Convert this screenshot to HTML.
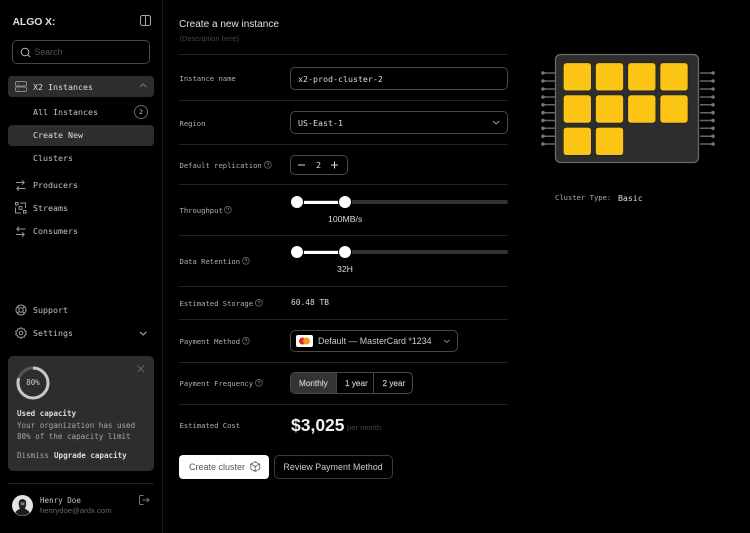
<!DOCTYPE html>
<html><head><meta charset="utf-8"><style>
*{box-sizing:border-box;margin:0;padding:0}
html,body{width:750px;height:533px;background:#000;overflow:hidden}
body{position:relative;font-family:"Liberation Sans",sans-serif;color:#ddd}
.a{position:absolute;white-space:nowrap}
.m{font-family:"DejaVu Sans Mono",monospace;font-size:8.3px;line-height:12px;color:#c4c4c4}
.l{font-family:"DejaVu Sans Mono",monospace;font-size:7.2px;line-height:10px;color:#b0b0b0;margin-top:.5px}
.t{font-family:"DejaVu Sans Mono",monospace;font-size:7.55px}
.hr{position:absolute;left:179px;width:329px;height:1px;background:#222}
.box{position:absolute;border:1px solid #484848;border-radius:5px;background:#000}
svg{position:absolute;overflow:visible}
.th{position:absolute;width:12px;height:12px;background:#fff;border-radius:50%;box-shadow:0 0 0 1px #000}
.tr{position:absolute;height:4px;background:#333;border-radius:2px;left:297px;width:211px}
.tw{position:absolute;height:3px;background:#fff;left:297px;width:48px}
.s{font-size:8.7px;line-height:12px;color:#ddd}
.q{fill:none;stroke:#777;stroke-width:.7}
</style></head><body>
<div class="a" style="left:162px;top:0;width:1px;height:533px;background:#1c1c1c"></div>

<div class="a" style="left:12.500px;top:15px;font-size:10.500px;font-weight:bold;line-height:14px;color:#ddd;letter-spacing:-.15px">ALGO X:</div>
<svg style="left:140px;top:15px" width="12" height="12" fill="none" stroke="#aaa"><rect x=".5" y=".5" width="10" height="10" rx="2"/><path d="M5.500 .5v10"/></svg>

<div class="box" style="left:12px;top:40px;width:138px;height:24px"></div>
<svg style="left:20px;top:47px" width="11" height="11" fill="none" stroke="#bbb"><circle cx="5" cy="5" r="3.800"/><path d="M8 8l2 2"/></svg>
<div class="a" style="left:34.500px;top:46px;font-size:8.800px;line-height:12px;color:#555">Search</div>

<div class="a" style="left:8px;top:76px;width:146px;height:21px;background:#2d2d2d;border-radius:4px"></div>
<svg style="left:15px;top:81px" width="13" height="12" fill="none" stroke="#888"><rect x=".5" y=".5" width="11" height="4.500" rx="1.500"/><rect x=".5" y="6" width="11" height="4.500" rx="1.500"/><path d="M3 2.700h1M3 8.200h1"/></svg>
<div class="a m" style="left:33px;top:81px;color:#ddd">X2 Instances</div>
<svg style="left:139px;top:83px" width="9" height="6" fill="none" stroke="#777"><path d="M1 4l3.200-3 3.200 3"/></svg>

<div class="a m" style="left:33px;top:106px">All Instances</div>
<div class="a" style="left:134px;top:105px;width:14px;height:14px;border:1px solid #666;border-radius:50%;font:6.500px/12px 'DejaVu Sans Mono',monospace;text-align:center;color:#ccc">2</div>
<div class="a" style="left:8px;top:125px;width:146px;height:21px;background:#2d2d2d;border-radius:4px"></div>
<div class="a m" style="left:33px;top:129px;color:#ddd">Create New</div>
<div class="a m" style="left:33px;top:152px">Clusters</div>

<svg style="left:16px;top:180px" width="10" height="11" fill="none" stroke="#999"><path d="M0 2.500h8M6 .3L8.200 2.500 6 4.700M1 8.500h8.500M3 6.300L.8 8.500 3 10.700"/></svg>
<div class="a m" style="left:33px;top:179px">Producers</div>
<svg style="left:15px;top:202px" width="12" height="12" fill="none" stroke="#999"><rect x=".5" y=".5" width="2.500" height="2.500"/><rect x="4" y="4.500" width="3" height="3" rx=".5"/><rect x="8.500" y="8.500" width="2.500" height="2.500"/><path d="M5 1h5.500v5M.5 5.500v5.500H6"/></svg>
<div class="a m" style="left:33px;top:202px">Streams</div>
<svg style="left:16px;top:226px" width="10" height="11" fill="none" stroke="#999"><path d="M1 3h8.500M3 .8L.8 3 3 5.200M0 8.500h8M6 6.300l2.200 2.200L6 10.700"/></svg>
<div class="a m" style="left:33px;top:225px">Consumers</div>

<svg style="left:15px;top:304px" width="12" height="12" fill="none" stroke="#999"><circle cx="6" cy="6" r="5"/><circle cx="6" cy="6" r="2.200"/><path d="M2.500 2.500l2 2M9.500 2.500l-2 2M2.500 9.500l2-2M9.500 9.500l-2-2"/></svg>
<div class="a m" style="left:33px;top:304px">Support</div>
<svg style="left:15px;top:327px" width="12" height="12" fill="none" stroke="#999"><path d="M6 .5l1.200 1.500 1.900-.2.500 1.800 1.700.9-.7 1.500.7 1.500-1.700.9-.5 1.800-1.900-.2L6 11.500 4.800 10l-1.900.2-.5-1.800-1.700-.9.700-1.500-.7-1.500 1.700-.9.500-1.800 1.900.2z"/><circle cx="6" cy="6" r="1.800"/></svg>
<div class="a m" style="left:33px;top:327px">Settings</div>
<svg style="left:139px;top:331px" width="9" height="6" fill="none" stroke="#bbb"><path d="M1 1l3.200 3 3.200-3"/></svg>

<div class="a" style="left:8px;top:356px;width:146px;height:115px;background:#2d2d2d;border-radius:5px"></div>
<svg style="left:16px;top:366px" width="34" height="34" fill="none"><circle cx="17" cy="17" r="15" stroke="#555" stroke-width="3"/><circle cx="17" cy="17" r="15" stroke="#c8c8c8" stroke-width="3" stroke-dasharray="75.400 94.200" transform="rotate(-90 17 17)"/></svg>
<div class="a" style="left:16px;top:377px;width:34px;text-align:center;font:7.500px/12px 'DejaVu Sans Mono',monospace;color:#ccc">80%</div>
<svg style="left:137px;top:365px" width="8" height="8" fill="none" stroke="#666"><path d="M.5.5l6.500 6.500M7 .5L.5 7"/></svg>
<div class="a t" style="left:17px;top:408px;line-height:11px;font-weight:bold;color:#ddd">Used capacity</div>
<div class="a t" style="left:17px;top:421px;line-height:10.500px;color:#a8a8a8;white-space:pre">Your organization has used
80% of the capacity limit</div>
<div class="a t" style="left:17px;top:450px;line-height:11px;color:#a8a8a8">Dismiss</div>
<div class="a t" style="left:54px;top:450px;line-height:11px;font-weight:bold;color:#ddd">Upgrade capacity</div>

<div class="a" style="left:8px;top:483px;width:146px;height:1px;background:#222"></div>
<svg style="left:12px;top:495px" width="22" height="22"><circle cx="10.500" cy="10.500" r="10.500" fill="#e4e4e4"/><path d="M3.500 17.500c1-2.500 3.500-3 4.500-4-1.200-1.500-1.800-5.500-.7-7.700C8.500 3.500 12.500 3.500 13.700 5.800c1 2.200.3 6.200-.9 7.700 1 1 3.700 1.500 4.700 4-1.800 2-4.300 3.200-7 3.200s-5.200-1.200-7-3.200z" fill="#1e1e1e"/><path d="M8.600 7.200h3.900v3H8.600z" fill="#8a7466"/></svg>
<div class="a t" style="left:40px;top:495px;line-height:11px;color:#c4c4c4">Henry Doe</div>
<div class="a" style="left:40px;top:505px;font-size:7.700px;line-height:12px;color:#666">henrydoe@ardx.com</div>
<svg style="left:139px;top:495px" width="11" height="11" fill="none" stroke="#777"><path d="M4.500.5H1.500Q.5.5.5 1.500v7q0 1 1 1h3M3.500 5h6.500M8 3l2 2-2 2"/></svg>

<div class="a" style="left:179px;top:17.500px;font-size:10.050px;line-height:14px;color:#e2e2e2">Create a new instance</div>
<div class="a" style="left:179.500px;top:33px;font-size:7.500px;line-height:11px;color:#444">(Description here)</div>
<div class="hr" style="top:54px"></div>

<div class="a l" style="left:179.500px;top:73px">Instance name</div>
<div class="box" style="left:290px;top:67px;width:218px;height:23px"></div>
<div class="a m" style="left:298px;top:73px;color:#ddd">x2-prod-cluster-2</div>
<div class="hr" style="top:100px"></div>

<div class="a l" style="left:179.500px;top:118px">Region</div>
<div class="box" style="left:290px;top:111px;width:218px;height:23px"></div>
<div class="a m" style="left:298px;top:117px;color:#ddd">US-East-1</div>
<svg style="left:492px;top:120px" width="9" height="6" fill="none" stroke="#999"><path d="M1 1l3.200 3 3.200-3"/></svg>
<div class="hr" style="top:144px"></div>

<div class="a l" style="left:179.500px;top:160px">Default replication</div>
<svg style="left:264px;top:161px" width="8" height="8"><g class="q"><circle cx="3.800" cy="3.800" r="3.400"/><path d="M2.800 3c0-1.400 2-1.400 2 0 0 .7-1 .7-1 1.500M3.800 5.400v.5"/></g></svg>
<div class="box" style="left:290px;top:155px;width:58px;height:20px"></div>
<svg style="left:298px;top:161px" width="42" height="8" fill="none" stroke="#ddd"><path d="M0 4h7M33 4h7M36.500 .5v7"/></svg>
<div class="a m" style="left:316px;top:159px;color:#ddd">2</div>
<div class="hr" style="top:184px"></div>

<div class="a l" style="left:179.500px;top:205px">Throughput</div>
<svg style="left:224px;top:206px" width="8" height="8"><g class="q"><circle cx="3.800" cy="3.800" r="3.400"/><path d="M2.800 3c0-1.400 2-1.400 2 0 0 .7-1 .7-1 1.500M3.800 5.400v.5"/></g></svg>
<div class="tr" style="top:200px"></div><div class="tw" style="top:200.500px"></div>
<div class="th" style="left:291px;top:196px"></div><div class="th" style="left:339px;top:196px"></div>
<div class="a s" style="left:328px;top:213px">100MB/s</div>
<div class="hr" style="top:235px"></div>

<div class="a l" style="left:179.500px;top:256px">Data Retention</div>
<svg style="left:242px;top:257px" width="8" height="8"><g class="q"><circle cx="3.800" cy="3.800" r="3.400"/><path d="M2.800 3c0-1.400 2-1.400 2 0 0 .7-1 .7-1 1.500M3.800 5.400v.5"/></g></svg>
<div class="tr" style="top:250px"></div><div class="tw" style="top:250.500px"></div>
<div class="th" style="left:291px;top:246px"></div><div class="th" style="left:339px;top:246px"></div>
<div class="a s" style="left:337px;top:263px">32H</div>
<div class="hr" style="top:286px"></div>

<div class="a l" style="left:179.500px;top:298px">Estimated Storage</div>
<svg style="left:255px;top:299px" width="8" height="8"><g class="q"><circle cx="3.800" cy="3.800" r="3.400"/><path d="M2.800 3c0-1.400 2-1.400 2 0 0 .7-1 .7-1 1.500M3.800 5.400v.5"/></g></svg>
<div class="a" style="left:291px;top:297px;font:7.900px/12px 'DejaVu Sans Mono',monospace;color:#ddd">60.48 TB</div>
<div class="hr" style="top:319px"></div>

<div class="a l" style="left:179.500px;top:336px">Payment Method</div>
<svg style="left:242px;top:337px" width="8" height="8"><g class="q"><circle cx="3.800" cy="3.800" r="3.400"/><path d="M2.800 3c0-1.400 2-1.400 2 0 0 .7-1 .7-1 1.500M3.800 5.400v.5"/></g></svg>
<div class="box" style="left:290px;top:330px;width:168px;height:22px"></div>
<svg style="left:296px;top:335px" width="18" height="12"><rect width="17" height="12" rx="2" fill="#fff"/><circle cx="6.500" cy="6" r="3.500" fill="#e5231b"/><circle cx="10.500" cy="6" r="3.500" fill="#f79e1b"/></svg>
<div class="a" style="left:318px;top:335px;font-size:8.850px;line-height:12px;color:#ccc">Default — MasterCard *1234</div>
<svg style="left:443px;top:339px" width="8" height="5" fill="none" stroke="#999" stroke-width=".8"><path d="M1 .8l2.800 2.600L6.600 .8"/></svg>
<div class="hr" style="top:362px"></div>

<div class="a l" style="left:179.500px;top:378px">Payment Frequency</div>
<svg style="left:255px;top:379px" width="8" height="8"><g class="q"><circle cx="3.800" cy="3.800" r="3.400"/><path d="M2.800 3c0-1.400 2-1.400 2 0 0 .7-1 .7-1 1.500M3.800 5.400v.5"/></g></svg>
<div class="box" style="left:290px;top:372px;width:123px;height:22px"></div>
<div class="a" style="left:291px;top:373px;width:46px;height:20px;background:#333;border-radius:4px 0 0 4px;border-right:1px solid #444"></div>
<div class="a" style="left:373px;top:373px;width:1px;height:20px;background:#444"></div>
<div class="a" style="left:299px;top:377.500px;font-size:8.200px;line-height:12px;color:#ccc;-webkit-text-stroke:.15px #ccc">Monthly</div>
<div class="a" style="left:345px;top:377.500px;font-size:8.200px;line-height:12px;color:#ccc;-webkit-text-stroke:.15px #ccc">1 year</div>
<div class="a" style="left:382.500px;top:377.500px;font-size:8.200px;line-height:12px;color:#ccc;-webkit-text-stroke:.15px #ccc">2 year</div>
<div class="hr" style="top:404px"></div>

<div class="a l" style="left:179.500px;top:420px">Estimated Cost</div>
<div class="a" style="left:291px;top:414px;font-size:17.500px;font-weight:bold;line-height:22px;color:#eee">$3,025</div>
<div class="a" style="left:347px;top:422px;font-size:7.600px;line-height:12px;color:#444">per month</div>

<div class="a" style="left:179px;top:455px;width:90px;height:24px;background:#fff;border-radius:4px"></div>
<div class="a" style="left:189px;top:461px;font-size:9px;line-height:12px;color:#555">Create cluster</div>
<svg style="left:250px;top:461px" width="11" height="12" fill="none" stroke="#555"><path d="M5.200 .8l4.500 2.200v5L5.200 10.500.7 8V3zM.7 3l4.500 2.500L9.700 3M5.200 5.500v5" stroke-dasharray="2 .6"/></svg>
<div class="box" style="left:274px;top:455px;width:119px;height:24px;border-color:#3c3c3c"></div>
<div class="a" style="left:283.500px;top:461px;font-size:8.800px;line-height:12px;color:#ccc;letter-spacing:.07px">Review Payment Method</div>

<svg style="left:541px;top:54px" width="174" height="110">
<g stroke="#666" stroke-width="1.500" fill="#777">
<path d="M2 19h13M2 27h13M2 35h13M2 43h13M2 50.800h13M2 58.700h13M2 66.500h13M2 74.300h13M2 82.200h13M2 90h13M159 19h13M159 27h13M159 35h13M159 43h13M159 50.800h13M159 58.700h13M159 66.500h13M159 74.300h13M159 82.200h13M159 90h13" fill="none"/>
<g stroke="none"><circle cx="2" cy="19" r="1.800"/><circle cx="2" cy="27" r="1.800"/><circle cx="2" cy="35" r="1.800"/><circle cx="2" cy="43" r="1.800"/><circle cx="2" cy="50.800" r="1.800"/><circle cx="2" cy="58.700" r="1.800"/><circle cx="2" cy="66.500" r="1.800"/><circle cx="2" cy="74.300" r="1.800"/><circle cx="2" cy="82.200" r="1.800"/><circle cx="2" cy="90" r="1.800"/><circle cx="172" cy="19" r="1.800"/><circle cx="172" cy="27" r="1.800"/><circle cx="172" cy="35" r="1.800"/><circle cx="172" cy="43" r="1.800"/><circle cx="172" cy="50.800" r="1.800"/><circle cx="172" cy="58.700" r="1.800"/><circle cx="172" cy="66.500" r="1.800"/><circle cx="172" cy="74.300" r="1.800"/><circle cx="172" cy="82.200" r="1.800"/><circle cx="172" cy="90" r="1.800"/></g>
</g>
<rect x="14.500" y=".5" width="143" height="108" rx="5" fill="#2d2d2d" stroke="#6a6a6a" stroke-width="1.300"/>
<g fill="#fcc515" stroke="#1c1c1c" stroke-width=".6">
<rect x="22.300" y="8.800" width="28" height="28" rx="3"/><rect x="54.500" y="8.800" width="28" height="28" rx="3"/><rect x="86.800" y="8.800" width="28" height="28" rx="3"/><rect x="119" y="8.800" width="28" height="28" rx="3"/>
<rect x="22.300" y="41" width="28" height="28" rx="3"/><rect x="54.500" y="41" width="28" height="28" rx="3"/><rect x="86.800" y="41" width="28" height="28" rx="3"/><rect x="119" y="41" width="28" height="28" rx="3"/>
<rect x="22.300" y="73.300" width="28" height="28" rx="3"/><rect x="54.500" y="73.300" width="28" height="28" rx="3"/>
</g></svg>
<div class="a l" style="left:555px;top:192px;color:#aaa">Cluster Type:</div>
<div class="a" style="left:618px;top:192px;font:8.200px/12px 'DejaVu Sans Mono',monospace;color:#ddd">Basic</div>
</body></html>
